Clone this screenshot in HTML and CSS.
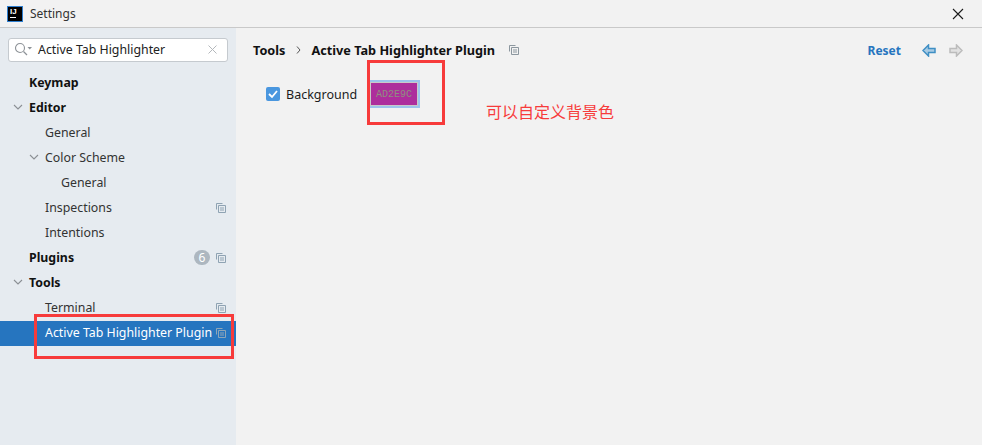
FILE: index.html
```html
<!DOCTYPE html>
<html lang="zh-CN">

<head>
  <meta charset="UTF-8">
  <title>Settings</title>
  <link rel="stylesheet" href="styles.css">
</head>

<body>
  <div class="titlebar">
    <div class="app-logo"><span class="app-logo-text">IJ</span><span class="app-logo-bar"></span></div>
    <span class="title-text">Settings</span>
    <svg class="close-icon" width="12" height="12" viewBox="0 0 12 12"><path d="M1 1l10 10M11 1L1 11" stroke="#1a1a1a" stroke-width="1.1" fill="none"/></svg>
  </div>

  <div class="main">
    <div class="sidebar">
      <div class="search">
        <svg width="19" height="14" viewBox="0 0 19 14"><circle cx="6" cy="6" r="4.5" stroke="#8d9297" stroke-width="1.1" fill="none"/><path d="M9.5 9.5l3.5 3.5" stroke="#8d9297" stroke-width="1.3"/><path d="M13.5 5h4.5l-2.250 2.500z" fill="#8d9297"/></svg>
        <span class="search-text">Active Tab Highlighter</span>
        <svg class="search-clear" width="9" height="9" viewBox="0 0 9 9"><path d="M.5.5l8 8M8.500.5l-8 8" stroke="#b4b8bc" stroke-width="1" fill="none"/></svg>
      </div>

      <div class="tree">
        <div class="row level0 bold">Keymap</div>
        <div class="row level0 bold">
          <svg class="chevron" width="10" height="6" viewBox="0 0 10 6"><path d="M1 1l4 4 4-4" stroke="#8b8f94" stroke-width="1.1" fill="none"/></svg>
          Editor
        </div>
        <div class="row level1">General</div>
        <div class="row level1">
          <svg class="chevron" width="10" height="6" viewBox="0 0 10 6"><path d="M1 1l4 4 4-4" stroke="#8b8f94" stroke-width="1.1" fill="none"/></svg>
          Color Scheme
        </div>
        <div class="row level2">General</div>
        <div class="row level1">Inspections
          <svg class="copy-icon" width="10" height="10" viewBox="0 0 10 10"><path d="M.5 6.500v-6h6M2.500 2.500h7v7h-7zM4 5h4M4 7h4" stroke="#8fa3b3" fill="none"/></svg>
        </div>
        <div class="row level1">Intentions</div>
        <div class="row level0 bold">Plugins
          <span class="badge">6</span>
          <svg class="copy-icon" width="10" height="10" viewBox="0 0 10 10"><path d="M.5 6.500v-6h6M2.500 2.500h7v7h-7zM4 5h4M4 7h4" stroke="#8fa3b3" fill="none"/></svg>
        </div>
        <div class="row level0 bold">
          <svg class="chevron" width="10" height="6" viewBox="0 0 10 6"><path d="M1 1l4 4 4-4" stroke="#8b8f94" stroke-width="1.1" fill="none"/></svg>
          Tools
        </div>
        <div class="row level1">Terminal
          <svg class="copy-icon" width="10" height="10" viewBox="0 0 10 10"><path d="M.5 6.500v-6h6M2.500 2.500h7v7h-7zM4 5h4M4 7h4" stroke="#8fa3b3" fill="none"/></svg>
        </div>
        <div class="row level1 selected">Active Tab Highlighter Plugin
          <svg class="copy-icon" width="10" height="10" viewBox="0 0 10 10"><path d="M.5 6.500v-6h6M2.500 2.500h7v7h-7zM4 5h4M4 7h4" stroke="#8fa6b8" fill="none"/></svg>
        </div>
      </div>
    </div>

    <div class="content">
      <div class="content-head">
        <span class="crumb">Tools</span>
        <svg class="crumb-sep" width="5" height="8" viewBox="0 0 5 8"><path d="M1 .500l3 3.500-3 3.500" stroke="#555" fill="none"/></svg>
        <span class="crumb">Active Tab Highlighter Plugin</span>
        <svg class="crumb-copy" width="10" height="10" viewBox="0 0 10 10"><path d="M.5 6.500v-6h6M2.500 2.500h7v7h-7zM4 5h4M4 7h4" stroke="#8c979f" fill="none"/></svg>
        <span class="reset">Reset</span>
        <svg class="arrow" width="14" height="13" viewBox="0 0 14 13"><path d="M6.500 1L1 6.500 6.500 12V8.500H13v-4H6.500z" fill="#a9cbe4" stroke="#3f8fc4" stroke-width="1.500"/></svg>
        <svg class="arrow" width="14" height="13" viewBox="0 0 14 13"><path d="M7.500 1L13 6.500 7.500 12V8.500H1v-4h6.500z" fill="#e2e2e2" stroke="#bcbcbc" stroke-width="1.500"/></svg>
      </div>

      <div class="option">
        <span class="checkbox">
          <svg width="14" height="14" viewBox="0 0 14 14"><path d="M3 7l3 3 5-6" stroke="#fff" stroke-width="1.800" fill="none"/></svg>
        </span>
        <span class="option-label">Background</span>
        <span class="color-field"><span class="color-value">AD2E9C</span></span>
      </div>
    </div>
  </div>

  <div class="mark mark-color"></div>
  <div class="mark mark-plugin"></div>
  <div class="note">可以自定义背景色</div>
</body>

</html>
```

FILE: styles.css
```css
html,
body {
  margin: 0;
  padding: 0;
  height: 445px;
  overflow: hidden;
}

body {
  position: relative;
  display: flex;
  flex-direction: column;
  background-color: #f2f2f2;
  font-family: "Noto Sans", "Noto Sans CJK SC", sans-serif;
  font-size: 12.350px;
  color: #1c1c1c;
}

.titlebar {
  display: flex;
  align-items: center;
  height: 27px;
  flex-shrink: 0;
  padding-left: 7px;
  border-bottom: 1px solid #c9c9c9;
  background-color: #f2f2f2;
}

.app-logo {
  box-sizing: border-box;
  position: relative;
  width: 16px;
  height: 16px;
  margin-right: 7px;
  border: 1px solid #2f7fd0;
  background-color: #000;
  color: #fff;
}

.app-logo-text {
  display: block;
  padding-left: 2px;
  font-family: "Liberation Sans", sans-serif;
  font-size: 8px;
  font-weight: bold;
  line-height: 9px;
}

.app-logo-bar {
  display: block;
  width: 6px;
  height: 1px;
  margin: 1px 0 0 2px;
  background-color: #fff;
}

.title-text {
  font-size: 12px;
  color: #333;
}

.close-icon {
  margin-left: auto;
  margin-right: 18px;
}

.main {
  display: flex;
  flex: 1;
}

.sidebar {
  width: 236px;
  flex-shrink: 0;
  padding-top: 10px;
  background-color: #e6ebf0;
}

.search {
  box-sizing: border-box;
  display: flex;
  align-items: center;
  width: 220px;
  height: 24px;
  margin-left: 8px;
  padding: 0 10px 2px 5px;
  border: 1px solid #c5cacf;
  border-radius: 3px;
  background-color: #fff;
}

.search-text {
  margin-left: 5px;
  color: #222;
}

.search-clear {
  margin-left: auto;
}

.tree {
  margin-top: 9px;
}

.row {
  box-sizing: border-box;
  position: relative;
  display: flex;
  align-items: center;
  height: 25px;
  padding-bottom: 2px;
  color: #333;
}

.level0 {
  padding-left: 29px;
}

.level1 {
  padding-left: 45px;
}

.level2 {
  padding-left: 61px;
}

.bold {
  font-weight: 700;
  color: #111;
}

.chevron {
  position: absolute;
  left: 13px;
  top: 8px;
}

.level1 .chevron {
  left: 29px;
}

.copy-icon {
  position: absolute;
  right: 10px;
  top: 7px;
}

.badge {
  position: absolute;
  right: 26px;
  top: 4px;
  width: 16px;
  height: 15px;
  border-radius: 8px;
  background-color: #adb7c0;
  color: #fff;
  font-size: 12px;
  font-weight: 400;
  line-height: 15px;
  text-align: center;
}

.selected {
  background-color: #2675bf;
  color: #fff;
}

.content {
  flex: 1;
  padding: 0 19px 0 17px;
}

.content-head {
  display: flex;
  align-items: center;
  height: 44px;
}

.crumb {
  font-size: 12.700px;
  font-weight: 700;
  color: #111;
}

.crumb-sep {
  margin: 0 10px 0 11px;
}

.crumb-copy {
  margin-left: 14px;
}

.reset {
  margin-left: auto;
  margin-right: 21px;
  font-size: 12px;
  font-weight: 700;
  color: #2675bf;
}

.arrow + .arrow {
  margin-left: 13px;
}

.option {
  display: flex;
  align-items: center;
  height: 28px;
  margin-top: 8px;
  padding-left: 13px;
}

.checkbox {
  width: 14px;
  height: 14px;
  border-radius: 2px;
  background-color: #4a97df;
}

.checkbox svg {
  display: block;
}

.option-label {
  margin-left: 6px;
  font-size: 12.500px;
}

.color-field {
  box-sizing: border-box;
  display: flex;
  align-items: center;
  justify-content: center;
  width: 52px;
  height: 28px;
  margin-left: 11px;
  border: 2px solid #9cc4ec;
  outline: 1px solid #c9c9c9;
  outline-offset: -3px;
  background-color: #ad2e9c;
}

.color-value {
  font-family: "Liberation Mono", monospace;
  font-size: 10px;
  color: #8f8f80;
}

.mark {
  position: absolute;
  box-sizing: border-box;
  border: 3px solid #f73b3b;
}

.mark-color {
  left: 367px;
  top: 60px;
  width: 78px;
  height: 65px;
}

.mark-plugin {
  left: 34px;
  top: 314px;
  width: 200px;
  height: 45px;
}

.note {
  position: absolute;
  left: 486px;
  top: 100px;
  color: #f73b3b;
  font-family: "Noto Sans CJK SC", sans-serif;
  font-size: 16px;
  line-height: 22px;
}
```
